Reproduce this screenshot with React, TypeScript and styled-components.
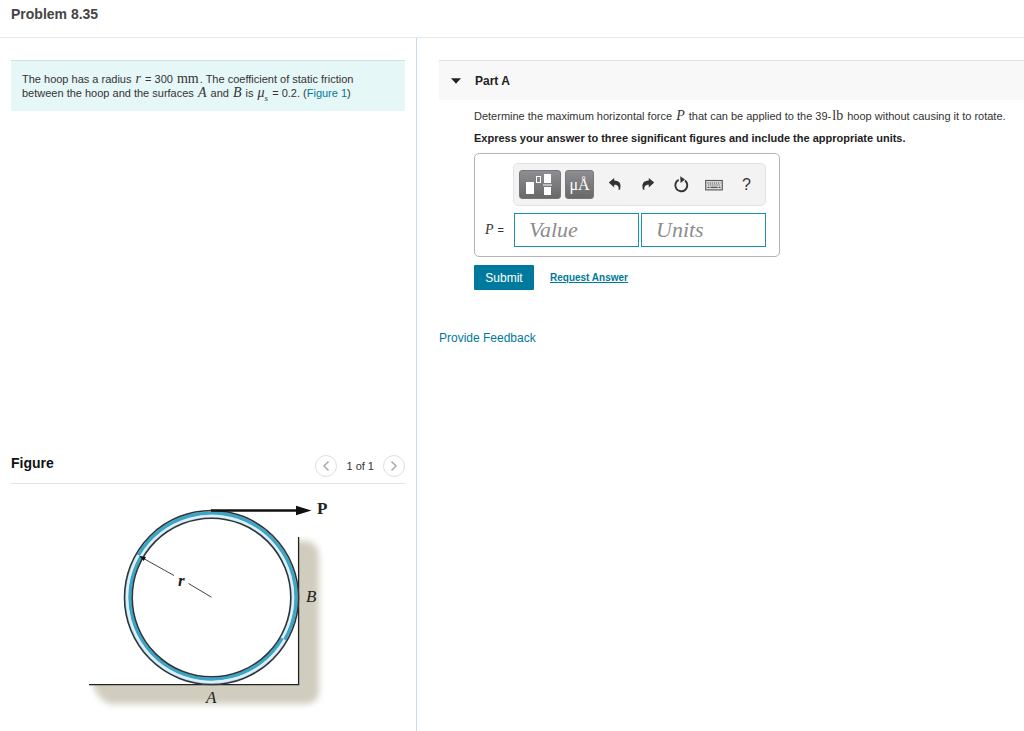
import React from "react";
import styled, { createGlobalStyle } from "styled-components";

const SANS = '"Liberation Sans", Arial, sans-serif';
const SERIF = '"Liberation Serif", "Times New Roman", serif';
const TEAL = "#007a9c";

const GlobalStyle = createGlobalStyle`
  * { box-sizing: border-box; }
  body { margin: 0; background: #fff; color: #333; font: 11px/14px ${SANS}; }
  h1, h2, p { margin: 0; }
  button { font-family: ${SANS}; cursor: pointer; }
`;

const Page = styled.div`
  display: flex;
  flex-direction: column;
  min-height: 100vh;
`;

const Header = styled.header`
  height: 38px;
  padding: 4px 11px;
  border-bottom: 1px solid #e6e8ea;
`;

const Title = styled.h1`
  font-size: 14px;
  line-height: 20px;
  color: #444;
`;

const Columns = styled.div`
  flex: 1;
  display: grid;
  grid-template-columns: minmax(340px, 417fr) minmax(400px, 607fr);
`;

const ProblemColumn = styled.section`
  display: flex;
  flex-direction: column;
  justify-content: space-between;
  gap: 24px;
  padding: 22px 11px 16px;
  border-right: 1px solid #c9dcea;
`;

const Statement = styled.p`
  padding: 11px;
  border-top: 1px solid #d5e0e0;
  background: #e6f7f7;
`;

const MathText = styled.span<{ $italic?: boolean; $size?: number }>`
  margin: 0 1px;
  font-family: ${SERIF};
  font-style: ${(p) => (p.$italic ? "italic" : "normal")};
  font-size: ${(p) => p.$size ?? 14}px;
  line-height: 0;
`;

const Subscript = styled.sub`
  font-size: 9px;
  line-height: 0;
`;

const Link = styled.a<{ $strong?: boolean }>`
  color: ${TEAL};
  font-size: ${(p) => (p.$strong ? "10px" : "inherit")};
  font-weight: ${(p) => (p.$strong ? "bold" : "normal")};
  text-decoration: ${(p) => (p.$strong ? "underline" : "none")};
`;

const FigureHeader = styled.div`
  display: flex;
  align-items: center;
  justify-content: space-between;
  height: 30px;
  padding-bottom: 6px;
  border-bottom: 1px solid #e2e2e2;
`;

const FigureTitle = styled.h2`
  font-size: 14px;
  line-height: 20px;
  padding-bottom: 6px;
  color: #111;
`;

const Pager = styled.div`
  display: flex;
  align-items: center;
  gap: 9px;
  padding-top: 1px;
`;

const PagerButton = styled.button`
  display: grid;
  place-items: center;
  width: 22px;
  height: 22px;
  padding: 0;
  border: 1px solid #dedede;
  border-radius: 50%;
  background: #fff;
`;

const Drawing = styled.svg`
  display: block;
  width: 260px;
  height: 220px;
  margin: 11px 0 0 69px;
`;

const AnswerColumn = styled.section`
  padding: 22px 0 22px 22px;
`;

const PartHeader = styled.button`
  display: flex;
  align-items: center;
  gap: 14px;
  width: 100%;
  height: 40px;
  padding: 0 12px;
  border: 0;
  border-top: 1px solid #e0e0e0;
  background: #f8f8f8;
  color: #222;
  font-size: 12px;
  font-weight: bold;
`;

const PartBody = styled.form`
  padding: 9px 8px 0 35px;
`;

const Question = styled.p`
  margin-bottom: 8px;
`;

const Instruction = styled.p`
  margin-bottom: 8px;
  font-weight: bold;
  color: #222;
`;

const AnswerBox = styled.div`
  width: fit-content;
  padding: 9px 13px 9px 9px;
  border: 1px solid #b4b4b4;
  border-radius: 5px;
`;

const Toolbar = styled.div`
  display: flex;
  align-items: center;
  height: 43px;
  margin: 0 0 7px 29px;
  padding: 0 2px 0 5px;
  border: 1px solid #e2e2e2;
  border-radius: 5px;
  background: #f3f3f3;
`;

const PaletteButton = styled.button<{ $width: number }>`
  display: grid;
  place-items: center;
  width: ${(p) => p.$width}px;
  height: 29px;
  margin-right: 4px;
  padding: 0;
  border: 1px solid #777779;
  border-radius: 3px;
  background: linear-gradient(#8e8e92, #68686a);
  color: #fff;
`;

const ToolButton = styled.button`
  display: grid;
  place-items: center;
  width: 33px;
  height: 29px;
  padding: 0;
  border: 0;
  background: none;
  color: #333;
  font-size: 16px;
`;

const FieldRow = styled.div`
  display: flex;
  align-items: center;
  gap: 2px;
`;

const FieldLabel = styled.label`
  width: 28px;
  white-space: nowrap;
`;

const AnswerInput = styled.input`
  width: 125px;
  height: 34px;
  padding: 0 14px;
  border: 1px solid #1c8fae;
  border-radius: 0;
  background: #fff;
  font: italic 22px ${SERIF};
  &::placeholder { color: #8c8c8c; opacity: 1; }
`;

const Actions = styled.div`
  display: flex;
  align-items: center;
  gap: 16px;
  margin-top: 8px;
`;

const SubmitButton = styled.button`
  width: 60px;
  height: 25px;
  padding: 0;
  border: 0;
  border-radius: 1px;
  background: ${TEAL};
  color: #fff;
  font-size: 12px;
`;

const Feedback = styled.div`
  margin-top: 41px;
  font-size: 12px;
`;

const Chevron = ({ right }: { right?: boolean }) => (
  <svg width="8" height="12" viewBox="0 0 8 12" fill="none" stroke="#aaa" strokeWidth="1.5">
    <path d={right ? "M1.5 1.5 6 6 1.5 10.5" : "M6.5 1.5 2 6 6.5 10.5"} />
  </svg>
);

const TemplateIcon = () => (
  <svg width="30" height="25" viewBox="0 0 30 25" fill="#fff">
    <path d="M1 10h8v12H1zM19 2h7v9h-7zM19 15h7v8h-7zM18 12.5h9v1h-9z" />
    <rect x="11.5" y="4.5" width="4" height="6" fill="none" stroke="#fff" />
  </svg>
);

const UndoIcon = ({ flip }: { flip?: boolean }) => (
  <svg width="14" height="16" viewBox="0 0 14 16" fill="#333">
    <path
      transform={flip ? "matrix(-1 0 0 1 14 0)" : undefined}
      d="M.8 5.6 6.2 1v2.6c5.2.2 7.4 3 5.9 8.9l-1.5.5c.4-3.8-.9-5.1-4.4-5.2v2.6z"
    />
  </svg>
);

const ResetIcon = () => (
  <svg width="16" height="18" viewBox="0 0 16 18">
    <path d="M12 4.6a6 6 0 1 1-6.3-.7" fill="none" stroke="#333" strokeWidth="1.9" />
    <path d="M7.2 .3 12 3.5 7.6 7z" fill="#333" />
  </svg>
);

const KeyboardIcon = () => (
  <svg width="18" height="12" viewBox="0 0 18 12" fill="none" stroke="#555">
    <rect x=".7" y="1.5" width="16.6" height="9.4" strokeWidth="1.1" fill="#ddd" />
    <path d="M2.5 4h13M3 6h12.5" strokeDasharray="1.2 .9" />
    <path d="M2.5 8.4h2M5.5 8.4h7M13.5 8.4h2" strokeWidth="1.3" />
  </svg>
);

const HalfRing = ({ lower, r, color, width }: { lower?: boolean; r: number; color: string; width: number }) => (
  <circle
    cx="211.5"
    cy="597.5"
    r={r}
    pathLength={2}
    strokeDasharray="1 1"
    transform={`rotate(${lower ? 30 : -150} 211.5 597.5)`}
    fill="none"
    stroke={color}
    strokeWidth={width}
  />
);

const HoopFigure = () => (
  <Drawing viewBox="80 495 260 220" role="img" aria-label="Hoop touching floor at A and wall at B">
    <defs>
      <filter id="soft" x="-20%" y="-20%" width="140%" height="140%">
        <feGaussianBlur stdDeviation="3" />
      </filter>
      <clipPath id="ground">
        <path d="M88 685H299V536H335V715H88z" />
      </clipPath>
    </defs>
    <g clipPath="url(#ground)">
      <path d="M93 675H288V541H309Q319 546 319 557V692Q318 704 304 704H110Q97 699 93 685z" fill="#d0ccbe" filter="url(#soft)" />
    </g>
    <path d="M89 684.7H298.6V537" fill="none" stroke="#222" strokeWidth="1.3" />
    <circle cx="211.5" cy="597.5" r="83.2" fill="none" stroke="#c2e2f0" strokeWidth="8" />
    <HalfRing r={84.5} color="#3aa5c4" width={3.2} />
    <HalfRing r={81.6} color="#e0f0fa" width={2} />
    <HalfRing lower r={81.6} color="#3aa5c4" width={3.2} />
    <HalfRing lower r={84.4} color="#e0f0fa" width={2} />
    <circle cx="211.5" cy="597.5" r="87" fill="none" stroke="#2e353a" strokeWidth="1.6" />
    <circle cx="211.5" cy="597.5" r="79.3" fill="none" stroke="#2e353a" strokeWidth="1.6" />
    <path d="M211 510.5H298" stroke="#111" strokeWidth="2.4" />
    <path d="M296 505.8 311.5 510.5 296 515.2z" fill="#111" />
    <path d="M140 556.5 174 575.5M188.5 583.5 211.5 597.2" stroke="#444" strokeWidth="1" />
    <path d="M139.5 556 146 557 143.7 561z" fill="#111" />
    <g fontFamily={SERIF} fill="#222">
      <text x="317" y="514" fontSize="17" fontWeight="bold">P</text>
      <text x="178" y="586" fontSize="17" fontStyle="italic" fontWeight="bold">r</text>
      <text x="306" y="602" fontSize="17" fontStyle="italic">B</text>
      <text x="206" y="703" fontSize="17" fontStyle="italic">A</text>
    </g>
  </Drawing>
);

export default function App() {
  return (
    <>
      <GlobalStyle />
      <Page>
        <Header>
          <Title>Problem 8.35</Title>
        </Header>
        <Columns>
          <ProblemColumn>
            <Statement>
              The hoop has a radius <MathText $italic>r</MathText> = 300 <MathText>mm</MathText>. The coefficient of static friction
              <br />
              between the hoop and the surfaces <MathText $italic>A</MathText> and <MathText $italic>B</MathText> is{" "}
              <MathText $italic>μ<Subscript>s</Subscript></MathText> = 0.2. (<Link href="#figure">Figure 1</Link>)
            </Statement>
            <div id="figure">
              <FigureHeader>
                <FigureTitle>Figure</FigureTitle>
                <Pager>
                  <PagerButton type="button" aria-label="Previous figure"><Chevron /></PagerButton>
                  <span>1 of 1</span>
                  <PagerButton type="button" aria-label="Next figure"><Chevron right /></PagerButton>
                </Pager>
              </FigureHeader>
              <HoopFigure />
            </div>
          </ProblemColumn>
          <AnswerColumn>
            <PartHeader type="button" aria-expanded="true">
              <svg width="10" height="6" viewBox="0 0 10 6"><path d="M0 .2h10L5 5.8z" fill="#222" /></svg>
              Part A
            </PartHeader>
            <PartBody onSubmit={(e) => e.preventDefault()}>
              <Question>
                Determine the maximum horizontal force <MathText $italic>P</MathText> that can be applied to the 39-<MathText>lb</MathText> hoop without causing it to rotate.
              </Question>
              <Instruction>Express your answer to three significant figures and include the appropriate units.</Instruction>
              <AnswerBox>
                <Toolbar>
                  <PaletteButton type="button" $width={42} aria-label="Templates"><TemplateIcon /></PaletteButton>
                  <PaletteButton type="button" $width={29} aria-label="Symbols"><MathText $size={16}>μÅ</MathText></PaletteButton>
                  <ToolButton type="button" aria-label="Undo"><UndoIcon /></ToolButton>
                  <ToolButton type="button" aria-label="Redo"><UndoIcon flip /></ToolButton>
                  <ToolButton type="button" aria-label="Reset"><ResetIcon /></ToolButton>
                  <ToolButton type="button" aria-label="Keyboard shortcuts"><KeyboardIcon /></ToolButton>
                  <ToolButton type="button" aria-label="Help">?</ToolButton>
                </Toolbar>
                <FieldRow>
                  <FieldLabel htmlFor="value"><MathText $italic>P</MathText> =</FieldLabel>
                  <AnswerInput id="value" placeholder="Value" />
                  <AnswerInput aria-label="Units" placeholder="Units" />
                </FieldRow>
              </AnswerBox>
              <Actions>
                <SubmitButton type="submit">Submit</SubmitButton>
                <Link $strong href="#answer">Request Answer</Link>
              </Actions>
            </PartBody>
            <Feedback><Link href="#feedback">Provide Feedback</Link></Feedback>
          </AnswerColumn>
        </Columns>
      </Page>
    </>
  );
}
